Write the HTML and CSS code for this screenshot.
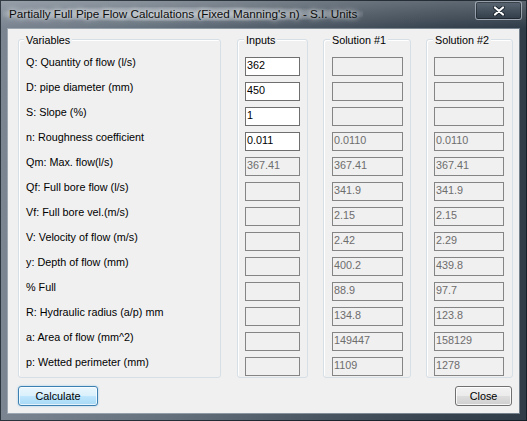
FILE: index.html
```html
<!DOCTYPE html>
<html>
<head>
<meta charset="utf-8">
<title>Partially Full Pipe Flow Calculations</title>
<link rel="stylesheet" href="styles.css">
</head>
<body>
<div class="window">
  <div class="titlebar">
    <span class="title">Partially Full Pipe Flow Calculations (Fixed Manning's n) - S.I. Units</span>
    <div class="close-x">
      <svg width="12" height="10" viewBox="0 0 12 10"><path d="M2 1.5 L10 8.5 M10 1.5 L2 8.5" stroke="#1c2630" stroke-width="4" stroke-linecap="round"/><path d="M2 1.5 L10 8.5 M10 1.5 L2 8.5" stroke="#ffffff" stroke-width="2.2" stroke-linecap="round"/></svg>
    </div>
  </div>
  <div class="client">
    <div class="groups">
      <div class="group g-vars">
        <span class="caption">Variables</span>
        <div class="rows">
          <div class="lbl">Q: Quantity of flow (l/s)</div>
          <div class="lbl">D: pipe diameter (mm)</div>
          <div class="lbl">S: Slope (%)</div>
          <div class="lbl">n: Roughness coefficient</div>
          <div class="lbl">Qm: Max. flow(l/s)</div>
          <div class="lbl">Qf: Full bore flow (l/s)</div>
          <div class="lbl">Vf: Full bore vel.(m/s)</div>
          <div class="lbl">V: Velocity of flow (m/s)</div>
          <div class="lbl">y: Depth of flow (mm)</div>
          <div class="lbl">% Full</div>
          <div class="lbl">R: Hydraulic radius (a/p) mm</div>
          <div class="lbl">a: Area of flow (mm^2)</div>
          <div class="lbl">p: Wetted perimeter (mm)</div>
        </div>
      </div>
      <div class="group g-in">
        <span class="caption">Inputs</span>
        <div class="rows">
          <div class="tb edit">362</div>
          <div class="tb edit">450</div>
          <div class="tb edit">1</div>
          <div class="tb edit">0.011</div>
          <div class="tb ro">367.41</div>
          <div class="tb ro"></div>
          <div class="tb ro"></div>
          <div class="tb ro"></div>
          <div class="tb ro"></div>
          <div class="tb ro"></div>
          <div class="tb ro"></div>
          <div class="tb ro"></div>
          <div class="tb ro"></div>
        </div>
      </div>
      <div class="group g-s1">
        <span class="caption">Solution #1</span>
        <div class="rows">
          <div class="tb ro"></div>
          <div class="tb ro"></div>
          <div class="tb ro"></div>
          <div class="tb ro">0.0110</div>
          <div class="tb ro">367.41</div>
          <div class="tb ro">341.9</div>
          <div class="tb ro">2.15</div>
          <div class="tb ro">2.42</div>
          <div class="tb ro">400.2</div>
          <div class="tb ro">88.9</div>
          <div class="tb ro">134.8</div>
          <div class="tb ro">149447</div>
          <div class="tb ro">1109</div>
        </div>
      </div>
      <div class="group g-s2">
        <span class="caption">Solution #2</span>
        <div class="rows">
          <div class="tb ro"></div>
          <div class="tb ro"></div>
          <div class="tb ro"></div>
          <div class="tb ro">0.0110</div>
          <div class="tb ro">367.41</div>
          <div class="tb ro">341.9</div>
          <div class="tb ro">2.15</div>
          <div class="tb ro">2.29</div>
          <div class="tb ro">439.8</div>
          <div class="tb ro">97.7</div>
          <div class="tb ro">123.8</div>
          <div class="tb ro">158129</div>
          <div class="tb ro">1278</div>
        </div>
      </div>
    </div>
    <div class="buttons">
      <div class="btn btn-default">Calculate</div>
      <div class="btn btn-close">Close</div>
    </div>
  </div>
</div>
</body>
</html>
```

FILE: styles.css
```css
html, body {
  margin: 0;
  padding: 0;
}
body {
  width: 527px;
  height: 421px;
  overflow: hidden;
  font-family: "Liberation Sans", Arial, sans-serif;
  background: #2e3a46;
}
.window {
  width: 527px;
  height: 421px;
  box-sizing: border-box;
  display: flex;
  flex-direction: column;
  background:
    linear-gradient(to bottom, rgba(255,255,255,0.22), rgba(255,255,255,0) 28px),
    linear-gradient(to right, #7a8591 0%, #66727e 30%, #4a5662 60%, #36424e 85%, #303c48 100%);
  box-shadow: inset 0 0 0 1px rgba(10,18,26,0.7);
}
.titlebar {
  height: 29px;
  flex: none;
  display: flex;
  justify-content: space-between;
  align-items: flex-start;
  padding: 0 5px 0 9px;
  box-sizing: border-box;
}
.title {
  font-size: 11.7px;
  line-height: 14px;
  margin-top: 7px;
  color: #0c0c0c;
  text-shadow: 0 0 5px rgba(255,255,255,0.9), 0 0 9px rgba(255,255,255,0.6);
  background: radial-gradient(ellipse at center, rgba(220,226,232,0.55) 0%, rgba(220,226,232,0.25) 60%, rgba(220,226,232,0) 80%);
  padding: 0 6px;
  margin-left: -6px;
}
.close-x {
  width: 47px;
  height: 19px;
  margin-top: 1px;
  box-sizing: border-box;
  border: 1px solid rgba(220,230,240,0.55);
  border-radius: 3px;
  background: linear-gradient(to bottom, rgba(90,104,118,0.6), rgba(40,52,64,0.6));
  box-shadow: inset 0 0 0 1px rgba(0,0,0,0.35);
  display: flex;
  align-items: center;
  justify-content: center;
}
.client {
  margin: 0 8px;
  height: 384px;
  flex: none;
  box-sizing: border-box;
  background: #f0f0f0;
  padding: 10px 6px 0 10px;
  box-shadow: 0 0 0 1px rgba(200,210,220,0.45);
}
.groups {
  display: flex;
  gap: 15px;
}
.group {
  position: relative;
  box-sizing: border-box;
  height: 339px;
  border: 1px solid #d5dfe5;
  border-radius: 3px;
  padding-top: 17px;
  box-shadow: inset 1px 1px 0 #ffffff;
}
.g-vars { width: 203px; margin-right: 1px; padding-left: 7px; }
.g-in { width: 71px; padding-left: 7px; }
.g-s1 { width: 88px; padding-left: 8px; }
.g-s2 { width: 87px; padding-left: 7px; }
.caption {
  position: absolute;
  top: -5px;
  left: 5px;
  padding: 0 2px;
  background: #f0f0f0;
  font-size: 10.8px;
  line-height: 11px;
  color: #000;
  white-space: nowrap;
}
.g-in .caption, .g-s1 .caption, .g-s2 .caption { left: 6px; }
.rows {
  display: flex;
  flex-direction: column;
  gap: 6px;
}
.lbl {
  height: 19px;
  font-size: 10.8px;
  line-height: 11px;
  color: #000;
  white-space: nowrap;
}
.tb {
  height: 19px;
  box-sizing: border-box;
  border: 1px solid #7a7a7a;
  font-size: 10.8px;
  line-height: 15px;
  padding-left: 1px;
  white-space: nowrap;
  overflow: hidden;
}
.g-in .tb { width: 55px; }
.g-s1 .tb { width: 71px; }
.g-s2 .tb { width: 70px; }
.edit {
  background: #ffffff;
  color: #000;
  border-color: #6f6f6f;
}
.ro {
  background: #f0f0f0;
  color: #6d6d6d;
  border-color: #858585;
}
.buttons {
  display: flex;
  justify-content: space-between;
  margin-top: 8px;
  padding-right: 1px;
}
.btn {
  height: 20px;
  box-sizing: border-box;
  border-radius: 3px;
  font-size: 10.8px;
  line-height: 18px;
  text-align: center;
  color: #000;
}
.btn-default {
  width: 80px;
  border: 1px solid #3c7fb1;
  background: linear-gradient(to bottom, #eaf6fd 0%, #d9f0fc 50%, #bee6fd 51%, #a7d9f5 100%);
  box-shadow: inset 0 0 0 1px rgba(255,255,255,0.7), 0 0 2px rgba(80,170,230,0.6);
}
.btn-close {
  width: 57px;
  border: 1px solid #707070;
  background: linear-gradient(to bottom, #f2f2f2 0%, #ebebeb 50%, #dddddd 51%, #cfcfcf 100%);
  box-shadow: inset 0 0 0 1px rgba(255,255,255,0.8);
}
```
